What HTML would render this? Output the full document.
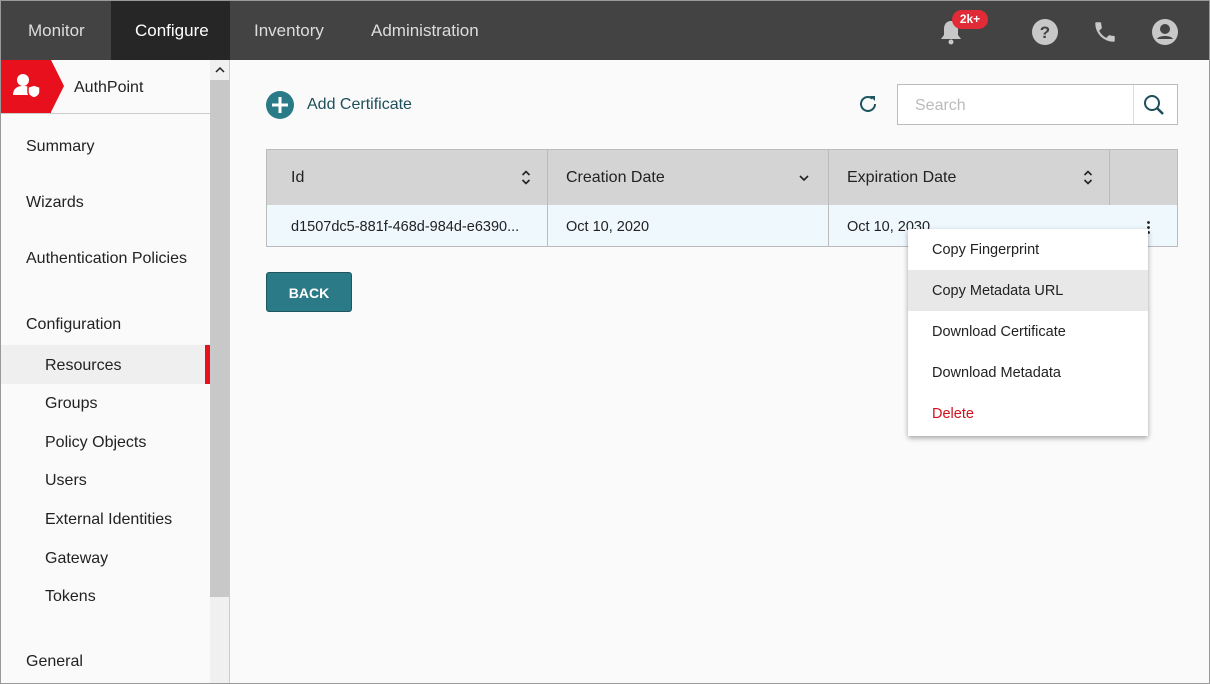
<!DOCTYPE html>
<html><head><meta charset="utf-8"><style>
*{box-sizing:border-box;margin:0;padding:0}
body{width:1210px;height:684px;overflow:hidden;background:#fafafa;font-family:"Liberation Sans",sans-serif;color:#222;position:relative}
.top{position:absolute;left:0;top:0;width:1210px;height:60px;background:#434343}
.tab{position:absolute;top:1px;height:60px;line-height:60px;font-size:17px;color:#ddd}
.side{position:absolute;left:0;top:60px;width:210px;height:624px;background:#fafafa;border-left:1px solid #aaa}
.sb{position:absolute;left:210px;top:60px;width:20px;height:624px;background:#f0f0f0;border-right:1px solid #ccc}
.it{position:absolute;font-size:16px;color:#222}
.main{position:absolute}
.menu div{height:41px;line-height:43px;padding-left:24px;font-size:14.5px}
</style></head><body>
<div class="top">
<div class="tab" style="left:28px">Monitor</div>
<div style="position:absolute;left:111px;top:0;width:119px;height:60px;background:#262626"></div>
<div class="tab" style="left:135px;color:#fff">Configure</div>
<div class="tab" style="left:254px">Inventory</div>
<div class="tab" style="left:371px">Administration</div>
<svg style="position:absolute;left:938px;top:18px" width="26" height="28" viewBox="0 0 26 28"><path d="M13 3c-5 0-7 4-7 8v6l-3 4h20l-3-4v-6c0-4-2-8-7-8z" fill="#c8c8c8"/><circle cx="13" cy="24" r="2.5" fill="#c8c8c8"/></svg>
<div style="position:absolute;left:952px;top:10px;width:36px;height:19px;border-radius:10px;background:#e12b36;color:#fff;font-size:12px;font-weight:bold;text-align:center;line-height:19px">2k+</div>
<svg style="position:absolute;left:1032px;top:19px" width="26" height="26"><circle cx="13" cy="13" r="13" fill="#c8c8c8"/><text x="13" y="19" text-anchor="middle" font-family="Liberation Sans" font-weight="bold" font-size="17" fill="#434343">?</text></svg>
<svg style="position:absolute;left:1092px;top:19px" width="26" height="26" viewBox="0 0 24 24"><path d="M6.6 10.8a15 15 0 0 0 6.6 6.6l2.2-2.2c.3-.3.7-.4 1-.2 1.1.4 2.3.6 3.6.6.6 0 1 .4 1 1V20c0 .6-.4 1-1 1A17 17 0 0 1 3 4c0-.6.4-1 1-1h3.5c.6 0 1 .4 1 1 0 1.3.2 2.5.6 3.6.1.3 0 .7-.2 1z" fill="#c8c8c8"/></svg>
<svg style="position:absolute;left:1152px;top:19px" width="26" height="26"><circle cx="13" cy="13" r="13" fill="#c8c8c8"/><circle cx="13" cy="10" r="5" fill="#434343"/><path d="M5 20c2-4 14-4 16 0z" fill="#434343"/></svg>
</div>
<div class="side">
<div style="position:absolute;left:0;top:0;width:50px;height:53px;background:#e8101c"></div>
<div style="position:absolute;left:50px;top:0;width:0;height:0;border-top:26.5px solid transparent;border-bottom:26.5px solid transparent;border-left:13px solid #e8101c"></div>
<svg style="position:absolute;left:12px;top:13px" width="28" height="26"><circle cx="10" cy="7" r="6" fill="#fff"/><path d="M0 22c0-7 5-9 10-9s7 1 8 2v7z" fill="#fff"/><path d="M15 14l6-2 6 2v5c0 3-3 5-6 6-3-1-6-3-6-6z" fill="#fff" stroke="#e8101c" stroke-width="1.5"/></svg>
<div class="it" style="left:73px;top:19px">AuthPoint</div>
<div style="position:absolute;left:0;top:53px;width:210px;height:1px;background:#ccc"></div>
<div class="it" style="left:25px;top:78px">Summary</div>
<div class="it" style="left:25px;top:134px">Wizards</div>
<div class="it" style="left:25px;top:190px">Authentication Policies</div>
<div class="it" style="left:25px;top:256px">Configuration</div>
<div style="position:absolute;left:0;top:285px;width:209px;height:39px;background:#efefef"></div>
<div style="position:absolute;left:204px;top:285px;width:5px;height:39px;background:#e8101c"></div>
<div class="it" style="left:44px;top:297px">Resources</div>
<div class="it" style="left:44px;top:335px">Groups</div>
<div class="it" style="left:44px;top:374px">Policy Objects</div>
<div class="it" style="left:44px;top:412px">Users</div>
<div class="it" style="left:44px;top:451px">External Identities</div>
<div class="it" style="left:44px;top:490px">Gateway</div>
<div class="it" style="left:44px;top:528px">Tokens</div>
<div class="it" style="left:25px;top:593px">General</div>
</div>
<div class="sb"><div style="position:absolute;left:0;top:20px;width:19px;height:517px;background:#c8c8c8"></div>
<svg style="position:absolute;left:5px;top:6px" width="10" height="8"><path d="M1 6l4-4 4 4" fill="none" stroke="#222" stroke-width="1.5"/></svg></div>
<!-- main -->
<svg class="main" style="left:265px;top:90px" width="30" height="30"><circle cx="15" cy="15" r="14" fill="#2b7a87"/><path d="M15 7v16M7 15h16" stroke="#fff" stroke-width="3"/></svg>
<div class="main" style="left:307px;top:96px;font-size:16px;color:#1d4f5a">Add Certificate</div>
<svg class="main" style="left:856px;top:92px" width="24" height="24" viewBox="0 0 24 24"><path d="M19 12a7 7 0 1 1-2.5-5.4" fill="none" stroke="#1d5560" stroke-width="2"/><path d="M14 4h5v5z" fill="#1d5560"/></svg>
<div class="main" style="left:897px;top:84px;width:281px;height:41px;border:1px solid #bbb;background:#fff"></div>
<div class="main" style="left:1133px;top:85px;width:1px;height:39px;background:#ddd"></div>
<div class="main" style="left:915px;top:97px;font-size:16px;color:#bbb">Search</div>
<svg class="main" style="left:1143px;top:94px" width="22" height="22"><circle cx="9" cy="9" r="7" fill="none" stroke="#1d4f5a" stroke-width="2"/><path d="M14 14l6 6" stroke="#1d4f5a" stroke-width="2.5"/></svg>
<div class="main" style="left:266px;top:149px;width:912px;height:98px;border:1px solid #bbb;background:#eef8fd"></div>
<div class="main" style="left:267px;top:150px;width:910px;height:55px;background:#d4d4d4"></div>
<div class="main" style="left:547px;top:150px;width:1px;height:96px;background:#bbb"></div>
<div class="main" style="left:828px;top:150px;width:1px;height:96px;background:#bbb"></div>
<div class="main" style="left:1109px;top:150px;width:1px;height:55px;background:#bbb"></div>
<div class="main" style="left:291px;top:169px;font-size:16px">Id</div>
<div class="main" style="left:566px;top:169px;font-size:16px">Creation Date</div>
<div class="main" style="left:847px;top:169px;font-size:16px">Expiration Date</div>
<svg class="main" style="left:521px;top:170px" width="10" height="15"><path d="M1.5 5l3.5-3.5 3.5 3.5M1.5 10l3.5 3.5 3.5-3.5" fill="none" stroke="#222" stroke-width="1.6"/></svg>
<svg class="main" style="left:799px;top:174px" width="10" height="8"><path d="M1 2l4 4 4-4" fill="none" stroke="#222" stroke-width="1.6"/></svg>
<svg class="main" style="left:1083px;top:170px" width="10" height="15"><path d="M1.5 5l3.5-3.5 3.5 3.5M1.5 10l3.5 3.5 3.5-3.5" fill="none" stroke="#222" stroke-width="1.6"/></svg>
<div class="main" style="left:291px;top:219px;font-size:14.5px">d1507dc5-881f-468d-984d-e6390...</div>
<div class="main" style="left:566px;top:219px;font-size:14.5px">Oct 10, 2020</div>
<div class="main" style="left:847px;top:219px;font-size:14.5px">Oct 10, 2030</div>
<div class="main" style="left:1147px;top:220px;width:3px;height:14px;background:radial-gradient(circle,#222 1.2px,transparent 1.6px) 0 0/3px 5px"></div>
<div class="main" style="left:266px;top:272px;width:86px;height:40px;background:#2b7a87;border:1px solid #1d5560;border-radius:3px;color:#fff;font-weight:bold;font-size:14px;text-align:center;line-height:40px">BACK</div>
<div class="main menu" style="left:908px;top:229px;width:240px;height:207px;background:#fff;box-shadow:0 2px 5px rgba(0,0,0,.35)">
<div>Copy Fingerprint</div>
<div style="background:#e8e8e8">Copy Metadata URL</div>
<div>Download Certificate</div>
<div>Download Metadata</div>
<div style="color:#d0101c">Delete</div>
</div>
<div style="position:absolute;left:0;top:0;width:1210px;height:684px;border:1px solid #999;pointer-events:none"></div>
</body></html>
